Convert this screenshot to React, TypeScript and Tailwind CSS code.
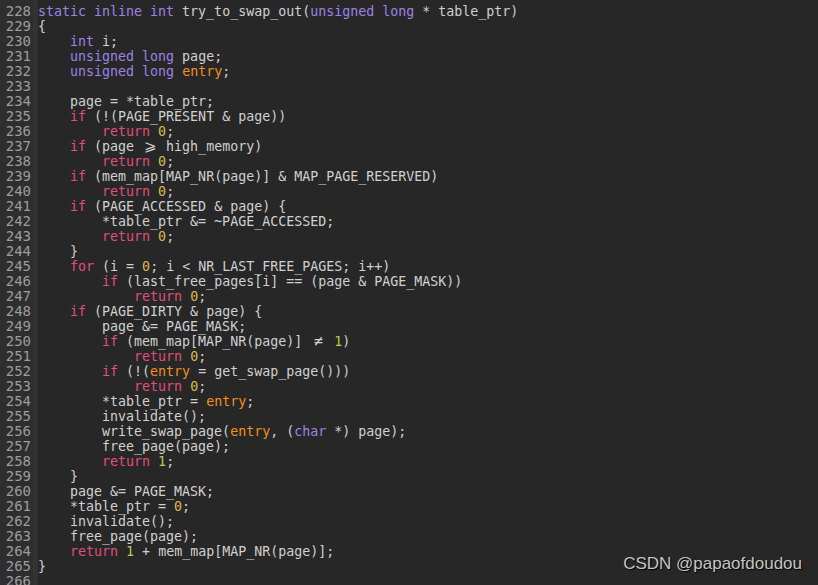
import React from "react";

type Tok = [string, string?];

const KW = "text-[#9d82e6]";
const CTL = "text-[#e0507a]";
const ZERO = "text-[#d8bc4a]";
const ONE = "text-[#b3cf4c]";
const VAR = "text-[#f0901e]";

// ligature glyphs take two cells, like in the editor font
function Lig({ ch }: { ch: string }) {
  return <span className="inline-block w-[16px] text-center text-[15px]">{ch}</span>;
}

const lines: (Tok[] | "lig-ge" | "lig-ne")[] = [
  [["static inline int", KW], [" try_to_swap_out("], ["unsigned long", KW], [" * table_ptr)"]],
  [["{"]],
  [["    "], ["int", KW], [" i;"]],
  [["    "], ["unsigned long", KW], [" page;"]],
  [["    "], ["unsigned long", KW], [" "], ["entry", VAR], [";"]],
  [],
  [["    page = *table_ptr;"]],
  [["    "], ["if", CTL], [" (!(PAGE_PRESENT & page))"]],
  [["        "], ["return", CTL], [" "], ["0", ZERO], [";"]],
  "lig-ge",
  [["        "], ["return", CTL], [" "], ["0", ZERO], [";"]],
  [["    "], ["if", CTL], [" (mem_map[MAP_NR(page)] & MAP_PAGE_RESERVED)"]],
  [["        "], ["return", CTL], [" "], ["0", ZERO], [";"]],
  [["    "], ["if", CTL], [" (PAGE_ACCESSED & page) {"]],
  [["        *table_ptr &= ~PAGE_ACCESSED;"]],
  [["        "], ["return", CTL], [" "], ["0", ZERO], [";"]],
  [["    }"]],
  [["    "], ["for", CTL], [" (i = "], ["0", ZERO], ["; i < NR_LAST_FREE_PAGES; i++)"]],
  [["        "], ["if", CTL], [" (last_free_pages[i] == (page & PAGE_MASK))"]],
  [["            "], ["return", CTL], [" "], ["0", ZERO], [";"]],
  [["    "], ["if", CTL], [" (PAGE_DIRTY & page) {"]],
  [["        page &= PAGE_MASK;"]],
  "lig-ne",
  [["            "], ["return", CTL], [" "], ["0", ZERO], [";"]],
  [["        "], ["if", CTL], [" (!("], ["entry", VAR], [" = get_swap_page()))"]],
  [["            "], ["return", CTL], [" "], ["0", ZERO], [";"]],
  [["        *table_ptr = "], ["entry", VAR], [";"]],
  [["        invalidate();"]],
  [["        write_swap_page("], ["entry", VAR], [", ("], ["char", KW], [" *) page);"]],
  [["        free_page(page);"]],
  [["        "], ["return", CTL], [" "], ["1", ONE], [";"]],
  [["    }"]],
  [["    page &= PAGE_MASK;"]],
  [["    *table_ptr = "], ["0", ZERO], [";"]],
  [["    invalidate();"]],
  [["    free_page(page);"]],
  [["    "], ["return", CTL], [" "], ["1", ONE], [" + mem_map[MAP_NR(page)];"]],
  [["}"]],
  [],
];

function CodeLine({ line }: { line: (typeof lines)[number] }) {
  if (line === "lig-ge") {
    return (
      <>
        {"    "}
        <span className={CTL}>if</span>
        {" (page "}
        <Lig ch="⩾" />
        {" high_memory)"}
      </>
    );
  }
  if (line === "lig-ne") {
    return (
      <>
        {"        "}
        <span className={CTL}>if</span>
        {" (mem_map[MAP_NR(page)] "}
        <Lig ch="≠" />
        {" "}
        <span className={ONE}>1</span>
        {")"}
      </>
    );
  }
  return (
    <>
      {line.map(([t, c], i) =>
        c ? (
          <span key={i} className={c}>
            {t}
          </span>
        ) : (
          <React.Fragment key={i}>{t}</React.Fragment>
        )
      )}
    </>
  );
}

export default function App() {
  return (
    <div className="relative w-[818px] h-[585px] overflow-hidden bg-[#272727] flex">
      <div className="w-[33px] bg-[#2e2e2e] pt-[4px] text-right pr-[2px] font-['DejaVu_Sans_Mono',monospace] text-[14px] leading-[15px] text-[#9c9c9c]">
        {lines.map((_, i) => (
          <div key={i} className="h-[15px]">
            {228 + i}
          </div>
        ))}
      </div>
      <div className="w-[5px] bg-[#323232]" />
      <div className="flex-1 pt-[4px] font-['DejaVu_Sans_Mono',monospace] text-[13.3px] leading-[15px] text-[#d0d0d0] whitespace-pre">
        {lines.map((l, i) => (
          <div key={i} className="h-[15px]">
            <CodeLine line={l} />
          </div>
        ))}
      </div>
      <div className="absolute right-[16px] bottom-[9px] font-['Liberation_Sans',Arial,sans-serif] text-[17px] text-[#c4c4c4] [text-shadow:1px_1px_1px_#000]">
        CSDN @papaofdoudou
      </div>
    </div>
  );
}
